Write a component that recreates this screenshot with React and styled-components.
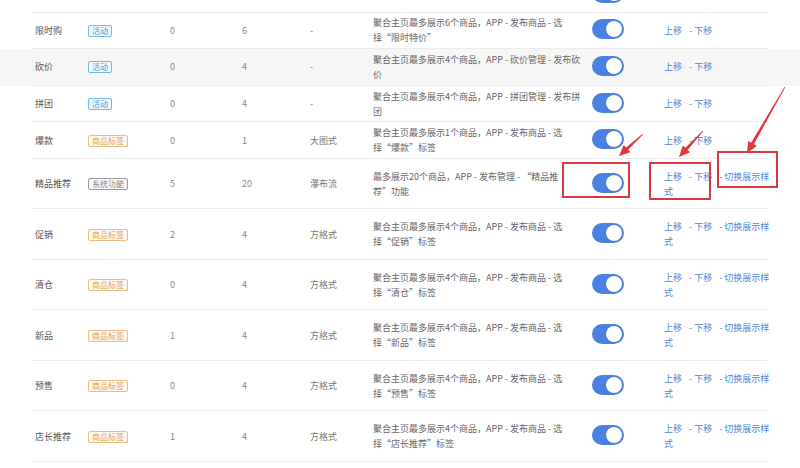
import React from "react";
import styled, { createGlobalStyle, css } from "styled-components";

const GlobalStyle = createGlobalStyle`
  html, body {
    margin: 0;
    padding: 0;
    background: #fff;
  }
  body {
    font-family: "Noto Sans CJK SC", "Noto Sans", sans-serif;
    font-size: 9px;
    color: #666;
    overflow: hidden;
  }
`;

const Page = styled.div`
  position: relative;
  width: 800px;
  height: 468px;
  overflow: hidden;
`;

const Table = styled.div`
  margin-top: -24px;
`;

const Row = styled.div`
  background: ${p => (p.hover ? "#f6f6f6" : "#fff")};
`;

const RowInner = styled.div`
  box-sizing: border-box;
  margin: 0 32px;
  height: ${p => (p.tall ? "50.5px" : "36.6px")};
  display: grid;
  grid-template-columns: 53px 82px 72px 68px 63px 219px 72px 107px;
  align-items: center;
  border-bottom: 1px solid #ebebeb;
`;

const Cell = styled.div`
  min-width: 0;
  padding-left: 3px;
  line-height: 15px;
  color: ${p => p.color || "#666"};
`;

const tagColors = {
  activity: css`
    color: #3fa3d9;
    border-color: #6cbbe6;
    background: #eef8fd;
  `,
  goods: css`
    color: #e3a15c;
    border-color: #ebbb86;
    background: #fff8ee;
  `,
  system: css`
    color: #888;
    border-color: #9a9a9a;
    background: #fafafa;
  `,
};

const Tag = styled.span`
  display: inline-block;
  font-size: 8px;
  line-height: 10px;
  padding: 0 3px;
  border: 1px solid;
  border-radius: 2px;
  ${p => tagColors[p.kind]}
`;

const DescLine = styled.div`
  white-space: nowrap;
  color: #666;
`;

const Switch = styled.span`
  display: inline-flex;
  justify-content: flex-end;
  align-items: center;
  box-sizing: border-box;
  width: 32px;
  height: 20px;
  padding: 0 2px;
  border-radius: 10px;
  background: #4b82e1;
`;

const Knob = styled.span`
  width: 16px;
  height: 16px;
  border-radius: 50%;
  background: #fff;
  box-shadow: 0 0 1px rgba(0, 0, 0, 0.35);
`;

const Actions = styled.div`
  width: 110px;
  line-height: 15px;
  white-space: nowrap;
`;

// links sit 7px apart; a link after a <br> starts flush at the left
const Action = styled.span`
  color: #4f86d9;
  & + & {
    margin-left: 7px;
  }
`;

const Marks = styled.svg`
  position: absolute;
  left: 0;
  top: 0;
  pointer-events: none;
`;

const rows = [
  { name: "限时购", tag: "活动", kind: "activity", min: 0, max: 6, mode: "-", desc: ["聚合主页最多展示6个商品，APP - 发布商品 - 选", "择“限时特价”"] },
  { name: "砍价", tag: "活动", kind: "activity", min: 0, max: 4, mode: "-", desc: ["聚合主页最多展示4个商品，APP - 砍价管理 - 发布砍", "价"], hover: true },
  { name: "拼团", tag: "活动", kind: "activity", min: 0, max: 4, mode: "-", desc: ["聚合主页最多展示4个商品，APP - 拼团管理 - 发布拼", "团"] },
  { name: "爆款", tag: "商品标签", kind: "goods", min: 0, max: 1, mode: "大图式", desc: ["聚合主页最多展示1个商品，APP - 发布商品 - 选", "择“爆款”标签"] },
  { name: "精品推荐", tag: "系统功能", kind: "system", min: 5, max: 20, mode: "瀑布流", desc: ["最多展示20个商品，APP - 发布管理 - “精品推", "荐”功能"], tall: true },
  { name: "促销", tag: "商品标签", kind: "goods", min: 2, max: 4, mode: "方格式", desc: ["聚合主页最多展示4个商品，APP - 发布商品 - 选", "择“促销”标签"], tall: true },
  { name: "清仓", tag: "商品标签", kind: "goods", min: 0, max: 4, mode: "方格式", desc: ["聚合主页最多展示4个商品，APP - 发布商品 - 选", "择“清仓”标签"], tall: true },
  { name: "新品", tag: "商品标签", kind: "goods", min: 1, max: 4, mode: "方格式", desc: ["聚合主页最多展示4个商品，APP - 发布商品 - 选", "择“新品”标签"], tall: true },
  { name: "预售", tag: "商品标签", kind: "goods", min: 0, max: 4, mode: "方格式", desc: ["聚合主页最多展示4个商品，APP - 发布商品 - 选", "择“预售”标签"], tall: true },
  { name: "店长推荐", tag: "商品标签", kind: "goods", min: 1, max: 4, mode: "方格式", desc: ["聚合主页最多展示4个商品，APP - 发布商品 - 选", "择“店长推荐”标签"], tall: true },
];

// tapered red arrow: thin tail, wider shaft near the head, triangular tip
const arrowPoints = (x1, y1, x2, y2) => {
  const dx = x2 - x1;
  const dy = y2 - y1;
  const len = Math.hypot(dx, dy);
  const ux = dx / len;
  const uy = dy / len;
  const nx = -uy;
  const ny = ux;
  const head = 11;
  const bx = x2 - ux * head;
  const by = y2 - uy * head;
  const pts = [
    [x1 + nx * 0.4, y1 + ny * 0.4],
    [bx + nx * 1.6, by + ny * 1.6],
    [bx + nx * 5, by + ny * 5],
    [x2, y2],
    [bx - nx * 5, by - ny * 5],
    [bx - nx * 1.6, by - ny * 1.6],
    [x1 - nx * 0.4, y1 - ny * 0.4],
  ];
  return pts.map(p => p.map(v => v.toFixed(1)).join(",")).join(" ");
};

const boxes = [
  [563, 163, 66, 34],
  [650, 163, 60, 36],
  [718, 152, 59, 35],
];

const arrows = [
  [643, 134, 619, 156],
  [703, 131, 679, 157],
  [785, 87, 747, 153],
];

export default function App() {
  return (
    <Page>
      <GlobalStyle />
      <Table>
        <Row>
          <RowInner>
            <Cell />
            <Cell />
            <Cell />
            <Cell />
            <Cell />
            <Cell />
            <Cell>
              <Switch>
                <Knob />
              </Switch>
            </Cell>
            <Cell />
          </RowInner>
        </Row>
        {rows.map(r => (
          <Row key={r.name} hover={r.hover}>
            <RowInner tall={r.tall}>
              <Cell color="#555">{r.name}</Cell>
              <Cell>
                <Tag kind={r.kind}>{r.tag}</Tag>
              </Cell>
              <Cell color="#888">{r.min}</Cell>
              <Cell color="#888">{r.max}</Cell>
              <Cell color="#777">{r.mode}</Cell>
              <Cell>
                {r.desc.map(line => (
                  <DescLine key={line}>{line}</DescLine>
                ))}
              </Cell>
              <Cell>
                <Switch>
                  <Knob />
                </Switch>
              </Cell>
              <Cell>
                <Actions>
                  <Action>上移</Action>
                  <Action>- 下移</Action>
                  {r.tall && (
                    <>
                      <Action>- 切换展示样</Action>
                      <br />
                      <Action>式</Action>
                    </>
                  )}
                </Actions>
              </Cell>
            </RowInner>
          </Row>
        ))}
      </Table>
      <Marks width="800" height="468" viewBox="0 0 800 468">
        {boxes.map(([x, y, w, h]) => (
          <rect key={x} x={x} y={y} width={w} height={h} fill="none" stroke="#d8393f" strokeWidth="2" />
        ))}
        {arrows.map(a => (
          <polygon key={a[0]} points={arrowPoints(...a)} fill="#e0373d" />
        ))}
      </Marks>
    </Page>
  );
}
